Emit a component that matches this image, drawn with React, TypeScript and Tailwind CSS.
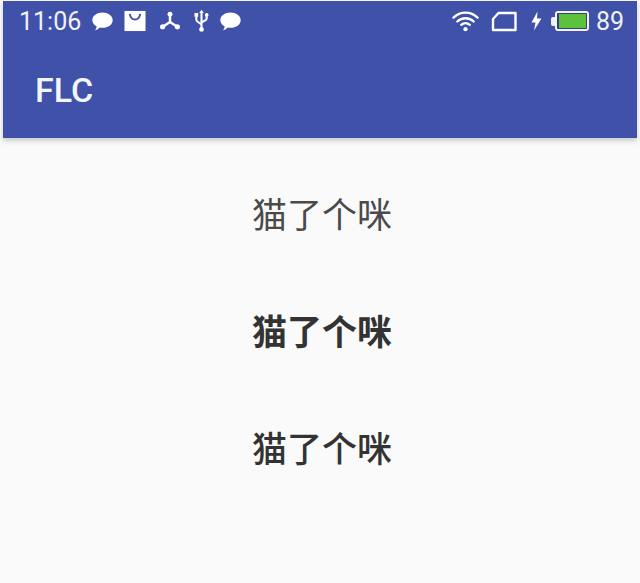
const cjk = "font-['Roboto','Noto_Sans_CJK_SC',sans-serif]"

function Bubble() {
  return (
    <svg width="21" height="19" viewBox="1 1 20 18" fill="white">
      <path d="M11 1.5c5.2 0 9.7 3 9.7 7.3s-4.500 7.200-9.700 7.200c-.9 0-1.800-.1-2.600-.3-1.200 1.300-3 2.500-4.600 2.800 1-1.100 1.600-2.500 1.600-3.900C3 13.300 1.300 11.200 1.300 8.800c0-4.300 4.500-7.300 9.700-7.300z" />
    </svg>
  )
}

function StatusLeft() {
  return (
    <div className="flex items-center">
      <span className="text-[25px] leading-none text-[#f0f2f8] font-['Roboto',sans-serif]">11:06</span>
      <div className="ml-[11px]"><Bubble /></div>
      <svg className="ml-[11px]" width="22" height="22" viewBox="0 0 23 22">
        <path d="M0.500 0.500h22v21h-22z" fill="white" />
        <path d="M6 3.500c0.800 4 2.800 6 5.500 6s4.700-2 5.500-6" fill="none" stroke="#3f51a8" strokeWidth="2" />
      </svg>
      <svg className="ml-[13px]" width="22" height="22" viewBox="0 0 23 22" fill="none" stroke="white" strokeWidth="2.600" strokeLinecap="round">
        <path d="M11.500 4v8M11.500 12l-7.500 5M11.500 12l7.500 5" />
        <circle cx="11.500" cy="4" r="2.600" fill="white" stroke="none" />
        <circle cx="3.800" cy="17" r="2.700" fill="white" stroke="none" />
        <circle cx="19.200" cy="17" r="2.700" fill="white" stroke="none" />
      </svg>
      <svg className="ml-[13px]" width="15" height="24" viewBox="0 0 16 24" fill="none" stroke="white" strokeWidth="2.200">
        <path d="M8 3v18M2.500 7v4c0 2.500 5.500 3 5.500 5.500M13.500 7v2.500c0 2.500-5.500 2.500-5.500 5" />
        <path d="M8 0l2.500 3.500h-5z" fill="white" stroke="none" />
        <rect x="0.500" y="3.500" width="4" height="4" fill="white" stroke="none" />
        <circle cx="13.500" cy="5.500" r="2" fill="white" stroke="none" />
        <circle cx="8" cy="21" r="2.500" fill="white" stroke="none" />
      </svg>
      <div className="ml-[11px]"><Bubble /></div>
    </div>
  )
}

function StatusRight() {
  return (
    <div className="flex items-center">
      <svg width="27" height="22" viewBox="0 0 28 22" fill="none" stroke="white" strokeWidth="2.400" strokeLinecap="round">
        <path d="M1.500 7.500C8.500 0.500 19.500 0.500 26.500 7.500" />
        <path d="M5.500 11.500c4.700-4.500 12.300-4.500 17 0" />
        <path d="M9.500 15c2.600-2.200 6.400-2.200 9 0" />
        <circle cx="14" cy="19.500" r="2.200" fill="white" stroke="none" />
      </svg>
      <svg className="ml-[12px]" width="26" height="21" viewBox="0 0 26 21" fill="none" stroke="white" strokeWidth="2.400" strokeLinejoin="round">
        <path d="M7.500 2H24.500V19H2V8z" />
      </svg>
      <svg className="ml-[14px]" width="11" height="20" viewBox="0 0 11 20" fill="white">
        <path d="M6.500 0.500L0.500 11.500H4.500L3 19.500L10.500 7.500H6z" />
      </svg>
      <div className="ml-[9px] flex items-center">
        <div className="h-[9px] w-[4px] rounded-l-[2px] bg-[#f0f2f8]" />
        <div className="flex h-[20px] w-[34px] justify-end rounded-[3px] border-2 border-[#f0f2f8] bg-[#323f7c] p-[1px]">
          <div className="h-full w-[27px] bg-[#5cc23c]" />
        </div>
      </div>
      <span className="ml-[7px] text-[25px] leading-none text-[#f0f2f8] font-['Roboto',sans-serif]">89</span>
    </div>
  )
}

function Line({ className }: { className: string }) {
  return <p className={`${cjk} text-[35px] leading-none text-center ${className}`}>猫了个咪</p>
}

export default function App() {
  return (
    <div className="h-[583px] w-[640px] overflow-hidden bg-[#fafafa]">
      <div className="px-[3px] pt-px">
        <header className="h-[137px] bg-[#3f51a8] shadow-[0_3px_5px_rgba(0,0,0,0.18)]">
          <div className="flex h-[40px] items-center justify-between pl-[16px] pr-[13px]">
            <StatusLeft />
            <StatusRight />
          </div>
          <div className="pl-[32px] pt-[32px]">
            <h1 className="text-[34px] leading-none font-medium text-[#f4f5fa] font-['Roboto',sans-serif]">FLC</h1>
          </div>
        </header>
      </div>
      <div className="flex flex-col gap-[82px] pl-[4px] pt-[61px]">
        <Line className="font-normal text-[#4a4a4a]" />
        <Line className="font-bold text-[#333333]" />
        <Line className="font-[500] text-[#333333]" />
      </div>
    </div>
  )
}
